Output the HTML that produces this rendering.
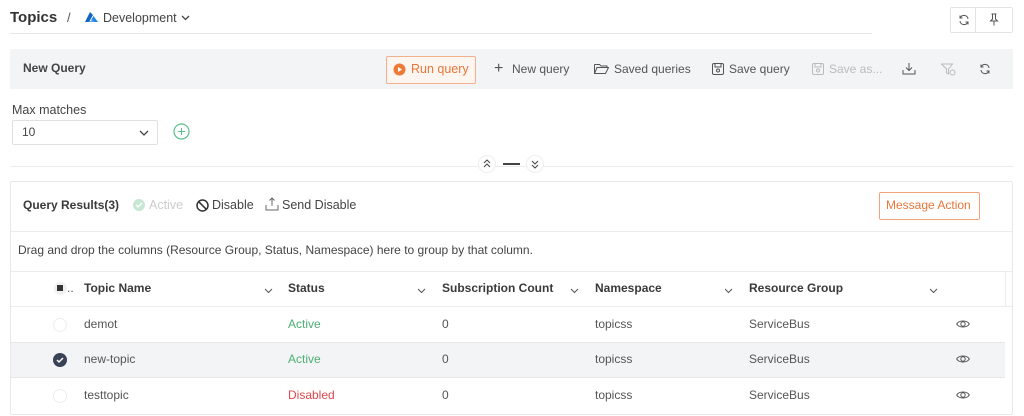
<!DOCTYPE html>
<html><head><meta charset="utf-8"><style>
*{margin:0;padding:0;box-sizing:border-box}
body{width:1024px;height:416px;background:#fff;font-family:"Liberation Sans",sans-serif;color:#333;position:relative;overflow:hidden;font-size:12px}
.a{position:absolute;white-space:nowrap}
svg{position:absolute}
.t{color:#555;font-size:12px}
.h{font-weight:bold;color:#3a3a3a;font-size:12px}
</style></head><body>
<div class="a" style="left:10px;top:9px;font-size:15px;font-weight:bold;color:#333">Topics</div>
<div class="a" style="left:67px;top:10px;font-size:13px;color:#555">/</div>
<svg style="left:85px;top:12px" width="14" height="11" viewBox="0 0 14 11"><path d="M5 0L0 10h4L8 3z" fill="#1565c0"/><path d="M8.5 4L6 8.5l3.5.8H3.5L3 10h10z" fill="#1e88e5"/></svg>
<div class="a" style="left:103px;top:11px;font-size:12.5px;color:#444">Development</div>
<svg style="left:181px;top:15px" width="9" height="6"><path d="M1 1l3.5 3.5L8 1" stroke="#444" fill="none" stroke-width="1.3"/></svg>
<div class="a" style="left:10px;top:33px;width:862px;height:1px;background:#e6e6e6"></div>
<div class="a" style="left:950px;top:7px;width:63px;height:26px;border:1px solid #e3e3e3;border-radius:2px"></div>
<div class="a" style="left:975px;top:8px;width:1px;height:24px;background:#e3e3e3"></div>
<svg style="left:958px;top:14px" width="12" height="12" viewBox="0 0 12 12"><path d="M10 5a4 4 0 0 0-7.5-1.5M2 7a4 4 0 0 0 7.5 1.5M2 1.5v2.5h2.5M10 10.5V8H7.5" stroke="#555" fill="none"/></svg>
<svg style="left:988px;top:13px" width="12" height="13" viewBox="0 0 12 13"><path d="M3.5 1h5M4.5 1v5L2.5 8h7L7.5 6V1M6 8v4.5" stroke="#555" fill="none"/></svg>

<div class="a" style="left:10px;top:49px;width:1003px;height:40px;background:#f3f4f6"></div>
<div class="a" style="left:23px;top:61px;font-size:12px;font-weight:bold;color:#444">New Query</div>
<div class="a" style="left:386px;top:56px;width:90px;height:28px;border:1px solid #f4b08c;border-radius:2px;background:#fdf5f0"></div>
<svg style="left:393px;top:63px" width="13" height="13"><circle cx="6.5" cy="6.5" r="6" fill="#ee7a3a"/><path d="M5 4l4 2.5L5 9z" fill="#fff"/></svg>
<div class="a" style="left:411px;top:62px;font-size:12.5px;color:#e8763a">Run query</div>
<div class="a" style="left:494px;top:60px;font-size:16px;color:#555;font-weight:300">+</div>
<div class="a t" style="left:512px;top:62px">New query</div>
<svg style="left:594px;top:63px" width="15" height="12" viewBox="0 0 15 12"><path d="M.5 1.5h5l1.5 1.5h6v2M.5 1.5v9h11l3-6H3l-2.5 6" stroke="#555" fill="none"/></svg>
<div class="a t" style="left:614px;top:62px">Saved queries</div>
<svg style="left:712px;top:63px" width="12" height="12"><rect x=".5" y=".5" width="11" height="11" rx="1.5" stroke="#555" fill="none"/><rect x="3" y=".5" width="6" height="3.5" stroke="#555" fill="none"/><circle cx="6" cy="7.5" r="1.5" stroke="#555" fill="none"/></svg>
<div class="a t" style="left:729px;top:62px">Save query</div>
<svg style="left:812px;top:63px" width="12" height="12"><rect x=".5" y=".5" width="11" height="11" rx="1.5" stroke="#bbb" fill="none"/><rect x="3" y=".5" width="6" height="3.5" stroke="#bbb" fill="none"/><circle cx="6" cy="7.5" r="1.5" stroke="#bbb" fill="none"/></svg>
<div class="a" style="left:829px;top:62px;font-size:12px;color:#bbb">Save as...</div>
<svg style="left:902px;top:62px" width="14" height="13" viewBox="0 0 14 13"><path d="M7 1v7M4 5.5L7 8.5l3-3M1 8v4h12V8" stroke="#555" fill="none"/></svg>
<svg style="left:941px;top:63px" width="15" height="13" viewBox="0 0 15 13"><path d="M.5 1h11L7.5 6v5l-2-1V6z" stroke="#bbb" fill="none"/><circle cx="11.5" cy="9.5" r="2.5" stroke="#bbb" fill="none"/></svg>
<svg style="left:979px;top:63px" width="12" height="12" viewBox="0 0 12 12"><path d="M10 5a4 4 0 0 0-7.5-1.5M2 7a4 4 0 0 0 7.5 1.5M2 1.5v2.5h2.5M10 10.5V8H7.5" stroke="#555" fill="none"/></svg>

<div class="a" style="left:12px;top:103px;font-size:12.5px;color:#444">Max matches</div>
<div class="a" style="left:12px;top:120px;width:146px;height:25px;border:1px solid #e0e0e0;border-radius:2px"></div>
<div class="a" style="left:22px;top:125px;font-size:12px;color:#444">10</div>
<svg style="left:139px;top:130px" width="10" height="6"><path d="M1 1l4 4 4-4" stroke="#444" fill="none" stroke-width="1.3"/></svg>
<svg style="left:173px;top:123px" width="17" height="17"><circle cx="8.5" cy="8.5" r="7.5" stroke="#5cbf8a" fill="none" stroke-width="1.2"/><path d="M8.5 5v7M5 8.5h7" stroke="#5cbf8a"/></svg>

<div class="a" style="left:10px;top:166px;width:1003px;height:1px;background:#ececec"></div>
<div class="a" style="left:478px;top:155px;width:18px;height:18px;border-radius:50%;background:#fff;border:1px solid #eee"></div>
<svg style="left:483px;top:159px" width="8" height="9"><path d="M1 4l3-3 3 3M1 8l3-3 3 3" stroke="#444" fill="none"/></svg>
<div class="a" style="left:503px;top:163px;width:17px;height:2px;background:#444"></div>
<div class="a" style="left:526px;top:155px;width:18px;height:18px;border-radius:50%;background:#fff;border:1px solid #eee"></div>
<svg style="left:531px;top:160px" width="8" height="9"><path d="M1 1l3 3 3-3M1 5l3 3 3-3" stroke="#444" fill="none"/></svg>

<div class="a" style="left:10px;top:181px;width:1003px;height:234px;border:1px solid #e8e8e8;border-radius:2px"></div>
<div class="a h" style="left:23px;top:198px">Query Results(3)</div>
<svg style="left:133px;top:199px" width="12" height="12"><circle cx="6" cy="6" r="6" fill="#c8e6d4"/><path d="M3 6l2 2 4-4" stroke="#fff" fill="none" stroke-width="1.4"/></svg>
<div class="a" style="left:149px;top:198px;color:#ccc;font-size:12.5px">Active</div>
<svg style="left:196px;top:199px" width="13" height="13"><circle cx="6.5" cy="6.5" r="5.5" stroke="#333" fill="none" stroke-width="1.5"/><path d="M2.8 2.8l7.4 7.4" stroke="#333" stroke-width="1.5"/></svg>
<div class="a" style="left:212px;top:198px;color:#444;font-size:12.5px">Disable</div>
<svg style="left:265px;top:197px" width="14" height="14" viewBox="0 0 14 14"><path d="M7 9V1M4.5 3.5L7 1l2.5 2.5M1 8v5h12V8" stroke="#666" fill="none"/></svg>
<div class="a" style="left:282px;top:198px;color:#444;font-size:12.5px">Send Disable</div>
<div class="a" style="left:879px;top:192px;width:101px;height:28px;border:1px solid #f4a27a;border-radius:2px"></div>
<div class="a" style="left:886px;top:198px;color:#e8763a;font-size:12px">Message Action</div>
<div class="a" style="left:11px;top:231px;width:1001px;height:1px;background:#ececec"></div>
<div class="a" style="left:18px;top:243px;color:#444;font-size:12px">Drag and drop the columns (Resource Group, Status, Namespace) here to group by that column.</div>
<div class="a" style="left:11px;top:271px;width:1001px;height:1px;background:#ececec"></div>
<div class="a" style="left:11px;top:306px;width:1001px;height:1px;background:#ececec"></div>
<div class="a" style="left:1005px;top:272px;width:1px;height:34px;background:#ececec"></div>
<div class="a" style="left:54px;top:282px;width:13px;height:13px;border-radius:50%;background:#f0f0f0"></div>
<div class="a" style="left:57px;top:285px;width:6px;height:6px;background:#333"></div>
<div class="a" style="left:67px;top:281px;color:#555">..</div>
<div class="a h" style="left:84px;top:281px">Topic Name</div>
<div class="a h" style="left:288px;top:281px">Status</div>
<div class="a h" style="left:442px;top:281px">Subscription Count</div>
<div class="a h" style="left:595px;top:281px">Namespace</div>
<div class="a h" style="left:749px;top:281px">Resource Group</div>
<svg style="left:264px;top:288px" width="9" height="6"><path d="M1 1l3.5 3.5L8 1" stroke="#555" fill="none"/></svg>
<svg style="left:417px;top:288px" width="9" height="6"><path d="M1 1l3.5 3.5L8 1" stroke="#555" fill="none"/></svg>
<svg style="left:570px;top:288px" width="9" height="6"><path d="M1 1l3.5 3.5L8 1" stroke="#555" fill="none"/></svg>
<svg style="left:724px;top:288px" width="9" height="6"><path d="M1 1l3.5 3.5L8 1" stroke="#555" fill="none"/></svg>
<svg style="left:929px;top:288px" width="9" height="6"><path d="M1 1l3.5 3.5L8 1" stroke="#555" fill="none"/></svg>

<div class="a" style="left:11px;top:342px;width:994px;height:36px;background:#f3f4f6;border-top:1px solid #e6e6e6;border-bottom:1px solid #e6e6e6"></div>

<div class="a" style="left:53px;top:318px;width:14px;height:14px;border-radius:50%;border:1px solid #eee"></div>
<div class="a t" style="left:84px;top:317px">demot</div>
<div class="a" style="left:288px;top:317px;color:#4caf73">Active</div>
<div class="a t" style="left:442px;top:317px">0</div>
<div class="a t" style="left:595px;top:317px">topicss</div>
<div class="a t" style="left:749px;top:317px">ServiceBus</div>

<svg style="left:53px;top:353px" width="14" height="14"><circle cx="7" cy="7" r="7" fill="#3a4257"/><path d="M4 7l2 2 4-4" stroke="#fff" fill="none" stroke-width="1.5"/></svg>
<div class="a t" style="left:84px;top:352px">new-topic</div>
<div class="a" style="left:288px;top:352px;color:#4caf73">Active</div>
<div class="a t" style="left:442px;top:352px">0</div>
<div class="a t" style="left:595px;top:352px">topicss</div>
<div class="a t" style="left:749px;top:352px">ServiceBus</div>

<div class="a" style="left:53px;top:389px;width:14px;height:14px;border-radius:50%;border:1px solid #eee"></div>
<div class="a t" style="left:84px;top:388px">testtopic</div>
<div class="a" style="left:288px;top:388px;color:#e0474c">Disabled</div>
<div class="a t" style="left:442px;top:388px">0</div>
<div class="a t" style="left:595px;top:388px">topicss</div>
<div class="a t" style="left:749px;top:388px">ServiceBus</div>

<svg style="left:956px;top:319px" width="14" height="10" viewBox="0 0 14 10"><path d="M.7 5C3 1 11 1 13.3 5 11 9 3 9 .7 5z" stroke="#555" fill="none"/><circle cx="7" cy="5" r="2.2" stroke="#555" fill="none"/></svg>
<svg style="left:956px;top:354px" width="14" height="10" viewBox="0 0 14 10"><path d="M.7 5C3 1 11 1 13.3 5 11 9 3 9 .7 5z" stroke="#555" fill="none"/><circle cx="7" cy="5" r="2.2" stroke="#555" fill="none"/></svg>
<svg style="left:956px;top:390px" width="14" height="10" viewBox="0 0 14 10"><path d="M.7 5C3 1 11 1 13.3 5 11 9 3 9 .7 5z" stroke="#555" fill="none"/><circle cx="7" cy="5" r="2.2" stroke="#555" fill="none"/></svg>
</body></html>
